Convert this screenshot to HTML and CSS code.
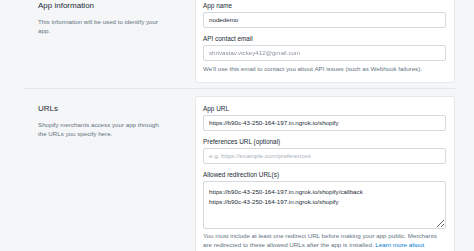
FILE: index.html
```html
<!DOCTYPE html>
<html lang="en">
<head>
    <meta charset="UTF-8">
    <meta name="viewport" content="width=device-width, initial-scale=1.0">
    <title>App setup</title>
    <link rel="stylesheet" href="styles.css">
</head>
<body>
    <div class="page">
        <div class="section first">
            <div class="info">
                <h2>App information</h2>
                <p>This information will be used to identify your app.</p>
            </div>
            <div class="card">
                <label>App name</label>
                <div class="input">nodedemo</div>
                <label>API contact email</label>
                <div class="input blur">shrivastav.vickey412@gmail.com</div>
                <div class="help">We'll use this email to contact you about API issues (such as Webhook failures).</div>
            </div>
        </div>

        <div class="divider"></div>

        <div class="section">
            <div class="info">
                <h2>URLs</h2>
                <p>Shopify merchants access your app through the URLs you specify here.</p>
            </div>
            <div class="card">
                <label>App URL</label>
                <div class="input">https://b90c-43-250-164-197.in.ngrok.io/shopify</div>
                <label>Preferences URL (optional)</label>
                <div class="input placeholder">e.g. https://example.com/preferences</div>
                <label>Allowed redirection URL(s)</label>
                <textarea class="area">https://b90c-43-250-164-197.in.ngrok.io/shopify/callback
https://b90c-43-250-164-197.in.ngrok.io/shopify</textarea>
                <div class="help">You must include at least one redirect URL before making your app public. Merchants are redirected to these allowed URLs after the app is installed. <a href="#">Learn more about</a></div>
            </div>
        </div>
    </div>
</body>
</html>
```

FILE: styles.css
```css
* {
    margin:0;
    padding:0;
    box-sizing: border-box;
}
body {
    background: #f5f6f8;
    font-family: "Liberation Sans", Arial, sans-serif;
    color: #212b36;
    overflow: hidden;
}
.page {
    padding: 0 19px 0 24px;
    margin-top: -7px;
}
.section {
    display: flex;
    flex-direction: row;
    align-items: flex-start;
}
.info {
    width: 171px;
    padding: 8px 34px 0 14px;
}
.info h2 {
    font-size: 8px;
    font-weight: normal;
    line-height: 10px;
    color: #212b36;
    margin-bottom: 6px;
}
.info p {
    font-size: 6.2px;
    line-height: 9px;
    color: #637381;
}
.card {
    flex: 1;
    background: white;
    border: 1px solid #e6e9ec;
    border-radius: 3px;
    padding: 7px 8px 9px 7px;
    display: flex;
    flex-direction: column;
}
.card label {
    font-size: 6.4px;
    line-height: 10px;
    margin-bottom: 1px;
}
.input, .area {
    border: 1px solid #d3d9de;
    border-radius: 2px;
    height: 16px;
    padding: 0 5px;
    font-size: 6.2px;
    line-height: 14px;
    color: #212b36;
    background: white;
    margin-bottom: 6px;
    white-space: nowrap;
    overflow: hidden;
}
.input.blur {
    color: #8a939c;
    filter: blur(0.5px);
}
.input.placeholder {
    color: #a9b2bb;
}
.area {
    height: 48px;
    font-family: "Liberation Sans", Arial, sans-serif;
    padding: 5px 5px 3px;
    line-height: 10px;
    white-space: pre;
    resize: vertical;
    margin-bottom: 2px;
}
.help {
    font-size: 6.2px;
    line-height: 9px;
    color: #637381;
    margin-top: -3px;
}
.area + .help {
    margin-top: 0;
}
.help a {
    color: #007ace;
    text-decoration: none;
}
.divider {
    height: 1px;
    background: #e3e6ea;
    margin: 5px 0 7px;
}
```
